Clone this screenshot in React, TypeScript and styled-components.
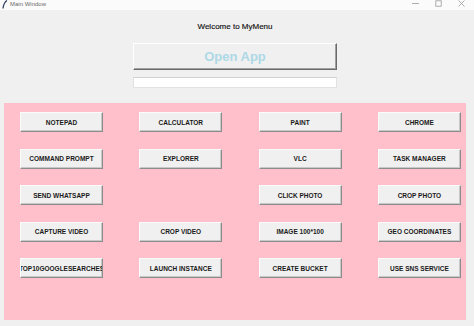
import React from 'react';
import styled, { createGlobalStyle } from 'styled-components';

const GlobalStyle = createGlobalStyle`
  html, body {
    margin: 0;
    padding: 0;
    background: #f0f0f0;
  }
  body {
    font-family: 'Liberation Sans', Arial, sans-serif;
  }
`;

const tools = [
  'NOTEPAD', 'CALCULATOR', 'PAINT', 'CHROME',
  'COMMAND PROMPT', 'EXPLORER', 'VLC', 'TASK MANAGER',
  'SEND WHATSAPP', null, 'CLICK PHOTO', 'CROP PHOTO',
  'CAPTURE VIDEO', 'CROP VIDEO', 'IMAGE 100*100', 'GEO COORDINATES',
  'TOP10GOOGLESEARCHES', 'LAUNCH INSTANCE', 'CREATE BUCKET', 'USE SNS SERVICE',
];

const FeatherIcon = () => (
  <svg width="6" height="9" viewBox="0 0 6 9">
    <path d="M5 0.5 C2.5 2 1.5 4.5 1 8.5" stroke="#2b3b5c" strokeWidth="1.2" fill="none" />
  </svg>
);

const MinIcon = () => (
  <svg width="7" height="7" viewBox="0 0 7 7">
    <line x1="0" y1="3.5" x2="7" y2="3.5" stroke="#9a9a9a" strokeWidth="0.8" />
  </svg>
);

const MaxIcon = () => (
  <svg width="7" height="7" viewBox="0 0 7 7">
    <rect x="0.8" y="0.8" width="5.4" height="5.4" stroke="#9a9a9a" strokeWidth="0.8" fill="none" />
  </svg>
);

const CloseIcon = () => (
  <svg width="7" height="7" viewBox="0 0 7 7">
    <path d="M0.5 0.5 L6.5 6.5 M6.5 0.5 L0.5 6.5" stroke="#9a9a9a" strokeWidth="0.8" />
  </svg>
);

export default function App() {
  return (
    <>
      <GlobalStyle />
      <Window>
        <TitleBar>
          <TitleLeft>
            <FeatherIcon />
            <TitleText>Main Window</TitleText>
          </TitleLeft>
          <Controls>
            <MinIcon />
            <MaxIcon />
            <CloseIcon />
          </Controls>
        </TitleBar>
        <Header>
          <Welcome>Welcome to MyMenu</Welcome>
          <OpenButton>Open App</OpenButton>
          <Entry />
        </Header>
        <PinkPanel>
          <ToolGrid>
            {tools.map((name, i) =>
              name ? <ToolButton key={i}><span>{name}</span></ToolButton> : <Empty key={i} />
            )}
          </ToolGrid>
        </PinkPanel>
      </Window>
    </>
  );
}

const Window = styled.div`
  width: 474px;
  height: 326px;
  display: flex;
  flex-direction: column;
  background: #f0f0f0;
  overflow: hidden;
`;

const TitleBar = styled.div`
  height: 10px;
  background: #fbfbfb;
  display: flex;
  align-items: center;
  justify-content: space-between;
  padding: 0 9px 0 2px;
`;

const TitleLeft = styled.div`
  display: flex;
  align-items: center;
  gap: 2px;
  margin-top: -2px;
`;

const TitleText = styled.span`
  font-size: 6px;
  color: #6a6a6a;
`;

const Controls = styled.div`
  display: flex;
  align-items: center;
  gap: 16px;
  margin-top: -3px;
`;

const Header = styled.div`
  display: flex;
  flex-direction: column;
  align-items: center;
  padding-right: 4px;
`;

const Welcome = styled.div`
  margin-top: 12px;
  font-size: 8px;
  line-height: 10px;
  color: #111;
  -webkit-text-stroke: 0.15px #111;
`;

const OpenButton = styled.div`
  margin-top: 11px;
  width: 204px;
  height: 27px;
  box-sizing: border-box;
  display: flex;
  align-items: center;
  justify-content: center;
  background: #f0f0f0;
  color: #add8e6;
  font-size: 13px;
  font-weight: bold;
  border-top: 1px solid #fff;
  border-left: 1px solid #fff;
  border-right: 1px solid #6a6a6a;
  border-bottom: 1px solid #6a6a6a;
  box-shadow: inset -1px -1px 0 #a0a0a0;
`;

const Entry = styled.div`
  margin-top: 7px;
  width: 204px;
  height: 11px;
  box-sizing: border-box;
  background: #fff;
  border: 1px solid #e2e2e2;
  border-top-color: #d0d0d0;
`;

const PinkPanel = styled.div`
  margin: 15px 8px 6px 4px;
  flex: 1;
  background: #ffc0cb;
  padding: 9px 0 0 16px;
`;

const ToolGrid = styled.div`
  display: grid;
  grid-template-columns: repeat(4, 83px);
  grid-auto-rows: 20px;
  column-gap: 36.3px;
  row-gap: 16.5px;
`;

const ToolButton = styled.div`
  box-sizing: border-box;
  display: flex;
  align-items: center;
  justify-content: center;
  overflow: hidden;
  white-space: nowrap;
  background: #f0f0f0;
  border-top: 1px solid #fbfbfb;
  border-left: 1px solid #fbfbfb;
  border-right: 1px solid #8c8c8c;
  border-bottom: 1px solid #8c8c8c;
  box-shadow: inset -1px -1px 0 #c8c8c8;

  span {
    font-size: 6.5px;
    font-weight: bold;
    color: #1a1a1a;
  }
`;

const Empty = styled.div``;
